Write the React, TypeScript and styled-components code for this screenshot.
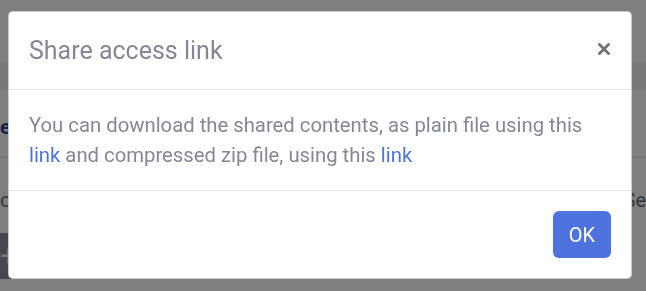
import { createGlobalStyle, styled } from 'styled-components'

const Global = createGlobalStyle`
  body {
    margin: 0;
    font-family: Roboto, "Liberation Sans", sans-serif;
    background: #ffffff;
    overflow: hidden;
  }
`

// page behind the dialog
const Page = styled.div`
  display: flex;
  flex-direction: column;
  height: 291px;
  background: #ffffff;
`

const TopBar = styled.div`
  height: 62px;
`

const TabBand = styled.div`
  height: 28px;
  background: #efefef;
`

const Section = styled.div<{ $h: number; $line?: boolean }>`
  display: flex;
  align-items: center;
  justify-content: space-between;
  height: ${({ $h }) => $h}px;
  border-bottom: ${({ $line }) => ($line ? '1px solid #dcdcdc' : 'none')};
  box-sizing: border-box;
  white-space: nowrap;
  overflow: hidden;
`

const PageLink = styled.span`
  font-size: 20px;
  font-weight: 700;
  color: #24468f;
  margin-top: 6px;
`

const PageText = styled.span`
  font-size: 20px;
  color: #6e6e6e;
  margin-top: 8px;
`

const DarkBar = styled.div`
  display: flex;
  align-items: center;
  width: 171px;
  height: 46px;
  background: #8c8e9e;
  color: #f4ecda;
  font-size: 30px;
  line-height: 1;
`

// overlay + dialog
const Backdrop = styled.div`
  position: fixed;
  inset: 0;
  background: rgba(0, 0, 0, 0.5);
  display: flex;
  align-items: flex-start;
`

const Dialog = styled.div`
  margin: 11px 0 0 8px;
  width: 624px;
  box-sizing: border-box;
  background: #ffffff;
  border: 1px solid rgba(0, 0, 0, 0.2);
  border-radius: 5px;
  display: flex;
  flex-direction: column;
`

const Header = styled.div`
  display: flex;
  align-items: center;
  justify-content: space-between;
  padding: 20px;
  border-bottom: 1px solid #e3e6f0;
`

const Title = styled.h5`
  margin: 0;
  font-size: 25px;
  font-weight: 400;
  line-height: 37px;
  color: #858796;
`

const CloseButton = styled.button`
  display: flex;
  align-items: center;
  justify-content: center;
  padding: 0;
  width: 14px;
  height: 14px;
  border: none;
  background: none;
  cursor: pointer;
  color: #737373;
  margin-top: -3px;
`

const Body = styled.div`
  padding: 20px;
  border-bottom: 1px solid #e3e6f0;
  font-size: 20.3px;
  line-height: 30px;
  color: #858796;
`

const Link = styled.a`
  color: #4e73df;
  text-decoration: none;
`

const Footer = styled.div`
  display: flex;
  justify-content: flex-end;
  padding: 20px;
`

const PrimaryButton = styled.button`
  font-family: Roboto, "Liberation Sans", sans-serif;
  font-size: 20px;
  line-height: 30px;
  padding: 8.5px 16px;
  border: none;
  border-radius: 6px;
  background: #4e73df;
  color: #ffffff;
  cursor: pointer;
`

export default function App() {
  return (
    <>
      <Global />
      <Page>
        <TopBar />
        <TabBand />
        <Section $h={68} $line>
          <PageLink>ew</PageLink>
        </Section>
        <Section $h={75}>
          <PageText>o</PageText>
          <PageText>Se</PageText>
        </Section>
        <DarkBar>+</DarkBar>
      </Page>
      <Backdrop>
        <Dialog role="dialog">
          <Header>
            <Title>Share access link</Title>
            <CloseButton aria-label="Close">
              <svg width="12" height="12" viewBox="0 0 12 12">
                <path d="M1.5 1.5 L10.5 10.5 M10.5 1.5 L1.5 10.5" stroke="currentColor" strokeWidth="2.8" strokeLinecap="square" />
              </svg>
            </CloseButton>
          </Header>
          <Body>
            You can download the shared contents, as plain file using this <Link href="#">link</Link> and compressed zip
            file, using this <Link href="#">link</Link>
          </Body>
          <Footer>
            <PrimaryButton>OK</PrimaryButton>
          </Footer>
        </Dialog>
      </Backdrop>
    </>
  )
}
